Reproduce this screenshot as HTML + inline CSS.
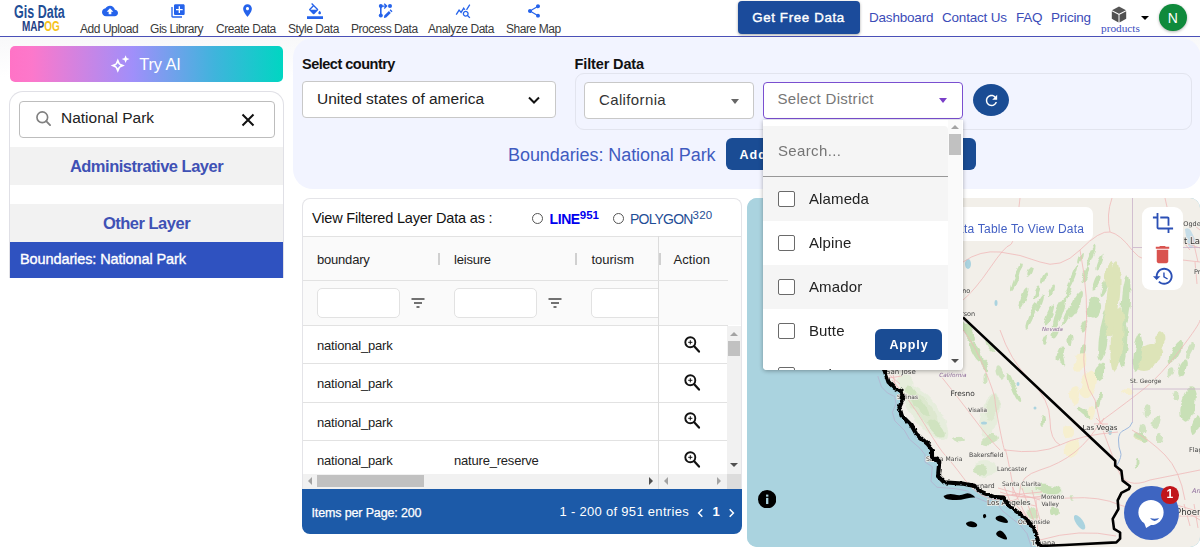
<!DOCTYPE html>
<html lang="en">
<head>
<meta charset="utf-8">
<title>GIS Data - MAPOG</title>
<style>
*{box-sizing:border-box;margin:0;padding:0}
html,body{width:1200px;height:558px;overflow:hidden;background:#fff;font-family:"Liberation Sans",sans-serif;color:#222}
.abs{position:absolute}
#hdr{position:absolute;left:0;top:0;width:1200px;height:37px;background:#fff;border-bottom:1.500px solid #4a50b8}
.nav{position:absolute;top:21.700px;font-size:12px;color:#3a3a3a;white-space:nowrap;letter-spacing:-0.45px;line-height:14px}
.nico{position:absolute;top:2px}
.rlink{position:absolute;top:10px;font-size:13.5px;color:#3b4cb8;white-space:nowrap;letter-spacing:-0.2px;line-height:16px}
#gfd{position:absolute;left:738px;top:1px;width:122px;height:33px;background:#1b4b9b;border-radius:4px;color:#fff;-webkit-text-stroke:0.4px #fff;font-size:13.300px;letter-spacing:0.65px;text-align:center;line-height:33.500px;padding-right:1px;box-shadow:0 1px 3px rgba(0,0,0,.35)}
#tryai{position:absolute;left:9.500px;top:45.500px;width:273.500px;height:36.500px;border-radius:5px;background:linear-gradient(90deg,#ff73c6 0%,#fc78cb 8%,#a08ffa 45%,#3fb4dc 75%,#00d6c2 100%);color:#fff;font-size:17.500px;line-height:37px}
#lbox{position:absolute;left:9px;top:91px;width:275px;height:186.500px;border:1px solid #e0e0e6;border-bottom:0;border-radius:14px 14px 0 0;background:#fff;overflow:hidden}
.band{position:absolute;left:0;width:273px;height:38px;background:#f2f2f2;color:#3f51b5;font-weight:bold;font-size:16.5px;text-align:center;line-height:38px;letter-spacing:-0.5px}
#top{position:absolute;left:292.500px;top:37.500px;width:908px;height:151px;background:#f2f4ff;border-radius:20px}
.lbl{position:absolute;font-weight:bold;font-size:14.5px;color:#111;letter-spacing:-0.5px;white-space:nowrap}
.sel{position:absolute;background:#fff;border:1px solid #c8c8c8;border-radius:4px;font-size:15px;color:#222;white-space:nowrap}
#tbl{position:absolute;left:302px;top:198px;width:440px;height:292px;background:#fff;border:1px solid #e4e4e8;border-bottom:0;border-radius:8px 8px 0 0;overflow:hidden}
.cell{position:absolute;font-size:13px;color:#222;white-space:nowrap;letter-spacing:-0.2px;line-height:15px}
#map{position:absolute;left:747px;top:198px;width:453px;height:348.500px;background:#aad3df;border-radius:10px;overflow:hidden}
#dd{position:absolute;left:763px;top:120px;width:199.500px;height:250px;background:#fff;box-shadow:0 1px 4px rgba(0,0,0,.32);border-radius:0 0 4px 4px;overflow:hidden}
.opt{position:absolute;left:0;width:185px;height:44px;font-size:15px;color:#222;line-height:44px;padding-left:46px;letter-spacing:0.12px}
.cb{position:absolute;left:15px;top:13.500px;width:16.500px;height:16.500px;border:1.500px solid #6a6a6a;border-radius:2px;background:#fff}
</style>
</head>
<body>
<div class="abs" style="left:0;top:37px;width:1200px;height:40px;background:linear-gradient(180deg,#f8f8f9 0,#fafafb 30%,#fff 100%)"></div>
<div id="hdr">
<div class="abs" id="lg1" style="left:13.800px;top:1.500px;font-weight:bold;font-size:18px;color:#1f4e96;white-space:nowrap;transform-origin:0 0;transform:scaleX(.695);line-height:20px">Gis Data</div>
<div class="abs" id="lg2" style="left:21.800px;top:17.500px;font-weight:bold;font-size:15px;color:#1f3f85;white-space:nowrap;transform-origin:0 0;transform:scaleX(.665);line-height:16px">MAP<span style="color:#f5c31c">OG</span></div>
<svg class="nico" style="left:102px;top:3px" width="16" height="16" viewBox="0 0 24 24"><path fill="#2563eb" d="M19.35 10.04C18.67 6.59 15.64 4 12 4 9.11 4 6.6 5.64 5.35 8.04 2.34 8.36 0 10.91 0 14c0 3.31 2.69 6 6 6h13c2.76 0 5-2.24 5-5 0-2.64-2.05-4.78-4.65-4.960zM14 13v4h-4v-4H7l5-5 5 5h-3z"/></svg>
<div class="nav" style="left:80px">Add Upload</div>
<svg class="nico" style="left:170px;top:3px" width="16" height="16" viewBox="0 0 24 24"><path fill="#2563eb" d="M4 6H2v14c0 1.100.900 2 2 2h14v-2H4V6zm16-4H8c-1.100 0-2 .900-2 2v12c0 1.100.900 2 2 2h12c1.100 0 2-.900 2-2V4c0-1.100-.900-2-2-2zm-1 9h-4v4h-2v-4H9V9h4V5h2v4h4v2z"/></svg>
<div class="nav" style="left:150px">Gis Library</div>
<svg class="nico" style="left:240px;top:3px" width="15" height="15" viewBox="0 0 24 24"><path fill="#2563eb" d="M12 2C8.130 2 5 5.130 5 9c0 5.250 7 13 7 13s7-7.750 7-13c0-3.870-3.130-7-7-7zm0 9.500c-1.380 0-2.500-1.120-2.500-2.500s1.120-2.500 2.500-2.500 2.500 1.120 2.500 2.500-1.120 2.500-2.500 2.500z"/></svg>
<div class="nav" style="left:216px">Create Data</div>
<svg class="nico" style="left:307px;top:3px" width="16" height="16" viewBox="0 0 24 24"><path fill="#2563eb" d="M16.560 8.940L7.620 0 6.210 1.410l2.380 2.380-5.150 5.150c-.590.590-.590 1.540 0 2.120l5.500 5.500c.290.290.680.440 1.060.440s.770-.150 1.060-.440l5.500-5.500c.590-.580.590-1.530 0-2.120zM5.210 10L10 5.210 14.790 10H5.210zM19 11.500s-2 2.170-2 3.500c0 1.100.900 2 2 2s2-.900 2-2c0-1.330-2-3.500-2-3.500zM0 20h24v4H0z"/></svg>
<div class="nav" style="left:288px">Style Data</div>
<svg class="nico" style="left:377px;top:2px" width="16" height="16" viewBox="0 0 16 16"><g fill="#2563eb"><circle cx="3.800" cy="4.100" r="2"/><circle cx="3.800" cy="13.400" r="2"/><circle cx="13" cy="4.100" r="2"/><rect x="3" y="4" width="1.600" height="9.500"/><path d="M7.700 1.200l2.900 2.900-2.900 2.900-.95-.95L8.100 4.750H5V3.450h3.100L6.750 2.150z"/><path d="M7.300 13.600l4.600-4.600 1.900 1.900-4.600 4.600-2.300.4zM12.600 8.300l1-1 1.900 1.900-1 1z"/></g></svg>
<div class="nav" style="left:351px">Process Data</div>
<svg class="nico" style="left:455px;top:3px" width="16" height="16" viewBox="0 0 24 24"><path fill="#2563eb" d="M19.880 18.470c.440-.700.700-1.510.700-2.390 0-2.490-2.010-4.500-4.500-4.500s-4.500 2.010-4.500 4.500 2.010 4.500 4.490 4.500c.880 0 1.700-.260 2.390-.700L21.580 23 23 21.580l-3.120-3.110zm-3.800.110c-1.380 0-2.500-1.120-2.500-2.500s1.120-2.500 2.500-2.500 2.500 1.120 2.500 2.500-1.120 2.500-2.500 2.500zm-.360-8.500c-.740.020-1.450.180-2.100.450l-.550-.830-3.800 6.180-3.010-3.520-3.630 5.810L1 17l5-8 3 3.500L13 6l2.720 4.080zm2.590.500c-.640-.280-1.330-.450-2.050-.490L21.380 2 23 3.180l-4.690 7.400z"/></svg>
<div class="nav" style="left:428px">Analyze Data</div>
<svg class="nico" style="left:526px;top:3px" width="16" height="16" viewBox="0 0 24 24"><path fill="#2563eb" d="M18 16.080c-.760 0-1.440.300-1.960.770L8.910 12.700c.050-.230.090-.460.090-.700s-.040-.470-.090-.700l7.050-4.110c.540.500 1.250.810 2.040.810 1.660 0 3-1.340 3-3s-1.340-3-3-3-3 1.340-3 3c0 .240.040.470.090.700L8.040 9.810C7.500 9.310 6.790 9 6 9c-1.660 0-3 1.340-3 3s1.340 3 3 3c.790 0 1.500-.310 2.040-.810l7.120 4.160c-.050.210-.080.430-.080.650 0 1.610 1.310 2.920 2.920 2.920 1.610 0 2.920-1.310 2.920-2.920s-1.310-2.920-2.920-2.920z"/></svg>
<div class="nav" style="left:506px">Share Map</div>
<div id="gfd">Get Free Data</div>
<div class="rlink" style="left:869px">Dashboard</div>
<div class="rlink" style="left:942px">Contact Us</div>
<div class="rlink" style="left:1016px">FAQ</div>
<div class="rlink" style="left:1051px">Pricing</div>
<svg class="abs" style="left:1111px;top:6px" width="16" height="17" viewBox="0 0 16 17"><path fill="#555" d="M8 0.600L15 4.200 8 7.800 1 4.200z"/><path fill="#505050" d="M0.800 5.200L7.500 8.700V16.400L0.800 12.700z"/><path fill="#505050" d="M15.200 5.200L8.500 8.700V16.400L15.200 12.700z"/></svg>
<div class="abs" style="left:1101px;top:21.500px;font-family:'Liberation Serif',serif;font-size:11.300px;color:#3b4cc0;line-height:13px">products</div>
<div class="abs" style="left:1141px;top:16px;width:0;height:0;border-left:4.500px solid transparent;border-right:4.500px solid transparent;border-top:4.500px solid #000"></div>
<div class="abs" style="left:1159px;top:3.500px;width:27.500px;height:27.500px;border-radius:50%;background:#0f8a3c;color:#fff;font-size:14px;text-align:center;line-height:28px;box-shadow:0 1px 3px rgba(0,0,0,.3)">N</div>
</div>
<div id="tryai"><svg class="abs" style="left:0;top:0" width="274" height="37" viewBox="0 0 274 37"><path fill="#fff" d="M107.80 12.50L110.00 17.40L114.90 19.60L110.00 21.80L107.80 26.70L105.60 21.80L100.70 19.60L105.60 17.40z"/><path fill="#a392f6" d="M107.80 17.00L108.90 18.50L110.40 19.60L108.90 20.70L107.80 22.20L106.70 20.70L105.20 19.60L106.70 18.50z"/><path fill="#fff" d="M115.60 9.20L116.70 12.00L119.50 13.10L116.70 14.20L115.60 17.00L114.50 14.20L111.70 13.10L114.50 12.00z"/></svg><span class="abs" style="left:129.800px;top:0.400px;letter-spacing:-0.15px;font-size:16.400px">Try AI</span></div>
<div id="lbox">
<div class="abs" style="left:9px;top:9px;width:256px;height:37px;border:1px solid #bdbdbd;border-radius:4px;background:#fff"></div>
<svg class="abs" style="left:25px;top:18px" width="17.500" height="17.500" viewBox="0 0 18 18"><circle cx="7.500" cy="7.500" r="5.500" fill="none" stroke="#808080" stroke-width="1.700"/><path d="M11.500 11.500L15.500 15.500" stroke="#808080" stroke-width="1.900" stroke-linecap="round"/></svg>
<div class="abs" id="np" style="left:51px;top:16.500px;font-size:15.500px;color:#222;line-height:18px;white-space:nowrap">National Park</div>
<svg class="abs" style="left:231px;top:21px" width="14" height="14" viewBox="0 0 14 14"><path d="M1.500 1.500L12.500 12.500M12.500 1.500L1.500 12.500" stroke="#111" stroke-width="2"/></svg>
<div class="band" style="top:55px">Administrative Layer</div>
<div class="band" style="top:112px">Other Layer</div>
<div class="abs" style="left:0;top:150px;width:274px;height:36px;background:#2f52c0;color:#fff;font-size:14.500px;-webkit-text-stroke:0.35px #fff;line-height:35px;padding-left:10px;letter-spacing:-0.1px;white-space:nowrap" id="bnp">Boundaries: National Park</div>
</div>
<div id="top"><div class="abs" style="left:0.500px;top:0.500px">
<div class="lbl" id="sc" style="left:9px;top:18px">Select country</div>
<div class="sel" style="left:9px;top:43px;width:254px;height:37px"><span class="abs" id="usa" style="left:14px;top:8px;font-size:15.500px;line-height:18px">United states of america</span><svg class="abs" style="left:224px;top:13px" width="14" height="10" viewBox="0 0 14 10"><path d="M2 2.500l5 5 5-5" fill="none" stroke="#111" stroke-width="2"/></svg></div>
<div class="lbl" id="fd" style="left:281.500px;top:18px;letter-spacing:-0.13px">Filter Data</div>
<div class="abs" style="left:282px;top:34.500px;width:617px;height:57px;border:1px solid #e2e4ee;border-radius:9px"></div>
<div class="sel" style="left:291px;top:44px;width:170px;height:37px"><span class="abs" id="cal" style="left:14px;top:7.500px;letter-spacing:0.37px;line-height:18px;color:#333">California</span><div class="abs" style="left:146px;top:16px;border-left:4.500px solid transparent;border-right:4.500px solid transparent;border-top:5px solid #666"></div></div>
<div class="sel" style="left:470px;top:44px;width:200px;height:37px;border:1.500px solid #7a4fd0"><span class="abs" id="sd" style="left:13.500px;top:7px;letter-spacing:0.31px;line-height:18px;color:#777">Select District</span><div class="abs" style="left:175px;top:15px;border-left:4.500px solid transparent;border-right:4.500px solid transparent;border-top:5px solid #7a3fc8"></div></div>
<div class="abs" style="left:680px;top:46px;width:36px;height:32px;border-radius:50%;background:#1a4c94"><svg class="abs" style="left:9.500px;top:7.500px" width="17" height="17" viewBox="0 0 24 24"><path fill="#fff" d="M17.650 6.350C16.200 4.900 14.210 4 12 4c-4.420 0-7.990 3.580-7.990 8s3.570 8 7.990 8c3.730 0 6.840-2.550 7.730-6h-2.080c-.820 2.330-3.040 4-5.650 4-3.310 0-6-2.690-6-6s2.690-6 6-6c1.660 0 3.140.690 4.220 1.780L13 11h7V4l-2.350 2.350z"/></svg></div>
<div class="abs" id="bt" style="left:215px;top:105.750px;font-size:18px;color:#3f5bbf;white-space:nowrap;line-height:22px;letter-spacing:-0.065px">Boundaries: National Park</div>
<div class="abs" style="left:432.500px;top:100px;width:250.500px;height:32px;border-radius:6px;background:#1a4c94;color:#fff;font-weight:bold;font-size:12.500px;letter-spacing:1px;line-height:35px;padding-left:14px;white-space:nowrap">Add Layer Data To Map</div>
</div></div>
<!--TBLSTART--><div id="tbl">
<div class="abs" id="vf" style="left:9px;top:9.750px;font-size:14.500px;color:#111;white-space:nowrap;letter-spacing:-0.19px;line-height:18px">View Filtered Layer Data as :</div>
<div class="abs" style="left:229px;top:14px;width:11px;height:11px;border:1px solid #555;border-radius:50%;background:#fff"></div>
<div class="abs" id="ln" style="left:246.500px;top:9.500px;font-size:14px;font-weight:bold;color:#0000ee;white-space:nowrap;line-height:20px;letter-spacing:-0.4px">LINE<span style="font-size:11.500px;position:relative;top:-5px;letter-spacing:0">951</span></div>
<div class="abs" style="left:309.500px;top:14px;width:11px;height:11px;border:1px solid #555;border-radius:50%;background:#fff"></div>
<div class="abs" id="pg" style="left:327px;top:9.500px;font-size:14px;color:#1f4e96;white-space:nowrap;line-height:20px;letter-spacing:-0.8px">POLYGON<span style="font-size:11.500px;position:relative;top:-5px;letter-spacing:0.2px">320</span></div>
<div class="abs" style="left:0;top:37.25px;width:440px;height:88.75px;background:#fafafa;border-top:1px solid #e2e2e2"></div>
<div class="abs" style="left:0;top:81px;width:425px;height:1px;background:#e2e2e2"></div>
<div class="cell" id="c1" style="left:14px;top:52.5px">boundary</div>
<div class="abs" style="left:134.500px;top:53.75px;width:2px;height:12.500px;background:#d0d0d0"></div>
<div class="cell" style="left:151px;top:52.5px">leisure</div>
<div class="abs" style="left:271.500px;top:53.75px;width:2px;height:12.500px;background:#d0d0d0"></div>
<div class="cell" style="left:288.400px;top:52.5px;letter-spacing:0px">tourism</div>
<div class="abs" style="left:14px;top:89px;width:83px;height:29.500px;background:#fff;border:1px solid #e2e2e2;border-radius:5px"></div>
<div class="abs" style="left:151px;top:89px;width:83px;height:29.500px;background:#fff;border:1px solid #e2e2e2;border-radius:5px"></div>
<div class="abs" style="left:288px;top:89px;width:83px;height:29.500px;background:#fff;border:1px solid #e2e2e2;border-radius:5px"></div>
<svg class="abs" style="left:108px;top:98.5px" width="14" height="10" viewBox="0 0 14 10"><path d="M0.500 1h13M3 5h8M5.500 9h3" stroke="#444" stroke-width="1.500"/></svg>
<svg class="abs" style="left:245px;top:98.5px" width="14" height="10" viewBox="0 0 14 10"><path d="M0.500 1h13M3 5h8M5.500 9h3" stroke="#444" stroke-width="1.500"/></svg>
<div class="abs" style="left:0;top:126px;width:425px;height:1px;background:#e2e2e2"></div>
<div class="cell" id="r0" style="left:14px;top:139px">national_park</div>
<div class="abs" style="left:0;top:164.25px;width:425px;height:1px;background:#e2e2e2"></div>
<div class="cell" id="r1" style="left:14px;top:177.25px">national_park</div>
<div class="abs" style="left:0;top:202.5px;width:425px;height:1px;background:#e2e2e2"></div>
<div class="cell" id="r2" style="left:14px;top:215.5px">national_park</div>
<div class="abs" style="left:0;top:241px;width:425px;height:1px;background:#e2e2e2"></div>
<div class="cell" id="r3" style="left:14px;top:254px">national_park</div>
<div class="cell" style="left:151px;top:254px">nature_reserve</div>
<div class="abs" style="left:355px;top:38.25px;width:70px;height:87.75px;background:#fafafa"></div>
<div class="abs" style="left:355px;top:127px;width:70px;height:147.8px;background:#fff"></div>
<div class="abs" style="left:355px;top:126px;width:70px;height:1px;background:#e2e2e2"></div>
<svg class="abs" style="left:381px;top:136.5px" width="16" height="16" viewBox="0 0 16 16" overflow="visible"><circle cx="6.300" cy="6.300" r="5" fill="none" stroke="#111" stroke-width="1.900"/><path d="M10.200 10.200L15 15.600" stroke="#111" stroke-width="2.200" stroke-linecap="round"/><path d="M4.200 6.300h4.200M6.300 4.200v4.200" stroke="#111" stroke-width="1"/></svg>
<div class="abs" style="left:355px;top:164.25px;width:70px;height:1px;background:#e2e2e2"></div>
<svg class="abs" style="left:381px;top:174.75px" width="16" height="16" viewBox="0 0 16 16" overflow="visible"><circle cx="6.300" cy="6.300" r="5" fill="none" stroke="#111" stroke-width="1.900"/><path d="M10.200 10.200L15 15.600" stroke="#111" stroke-width="2.200" stroke-linecap="round"/><path d="M4.200 6.300h4.200M6.300 4.200v4.200" stroke="#111" stroke-width="1"/></svg>
<div class="abs" style="left:355px;top:202.5px;width:70px;height:1px;background:#e2e2e2"></div>
<svg class="abs" style="left:381px;top:213.0px" width="16" height="16" viewBox="0 0 16 16" overflow="visible"><circle cx="6.300" cy="6.300" r="5" fill="none" stroke="#111" stroke-width="1.900"/><path d="M10.200 10.200L15 15.600" stroke="#111" stroke-width="2.200" stroke-linecap="round"/><path d="M4.200 6.300h4.200M6.300 4.200v4.200" stroke="#111" stroke-width="1"/></svg>
<div class="abs" style="left:355px;top:241px;width:70px;height:1px;background:#e2e2e2"></div>
<svg class="abs" style="left:381px;top:251.5px" width="16" height="16" viewBox="0 0 16 16" overflow="visible"><circle cx="6.300" cy="6.300" r="5" fill="none" stroke="#111" stroke-width="1.900"/><path d="M10.200 10.200L15 15.600" stroke="#111" stroke-width="2.200" stroke-linecap="round"/><path d="M4.200 6.300h4.200M6.300 4.200v4.200" stroke="#111" stroke-width="1"/></svg>
<div class="abs" style="left:355px;top:37.25px;width:1px;height:252.25px;background:#dcdcdc"></div>
<div class="abs" style="left:356px;top:53.75px;width:2px;height:12.500px;background:#d0d0d0"></div>
<div class="cell" style="left:370.500px;top:52.5px;letter-spacing:0.07px">Action</div>
<div class="abs" style="left:355px;top:81px;width:70px;height:1px;background:#e2e2e2"></div>
<div class="abs" id="vs" style="left:424px;top:127px;width:16px;height:147.8px;background:#f1f1f1"><div class="abs" style="left:3px;top:5.500px;border-left:4px solid transparent;border-right:4px solid transparent;border-bottom:4px solid #a3a3a3"></div><div class="abs" style="left:1px;top:14.500px;width:12px;height:15px;background:#c1c1c1"></div><div class="abs" style="left:3px;top:136.8px;border-left:4px solid transparent;border-right:4px solid transparent;border-top:4px solid #505050"></div></div>
<div class="abs" id="hs" style="left:0;top:274.8px;width:440px;height:16.19999999999999px;background:#f1f1f1"><div class="abs" style="left:5px;top:3px;border-top:4px solid transparent;border-bottom:4px solid transparent;border-right:4px solid #a3a3a3"></div><div class="abs" style="left:14px;top:1px;width:107px;height:12px;background:#c1c1c1"></div><div class="abs" style="left:346px;top:3px;border-top:4px solid transparent;border-bottom:4px solid transparent;border-left:4px solid #505050"></div><div class="abs" style="left:361px;top:3px;border-top:4px solid transparent;border-bottom:4px solid transparent;border-right:4px solid #a3a3a3"></div><div class="abs" style="left:414px;top:3px;border-top:4px solid transparent;border-bottom:4px solid transparent;border-left:4px solid #a3a3a3"></div><div class="abs" style="left:424px;top:0;width:16px;height:17px;background:#dcdcdc"></div><div class="abs" style="left:355px;top:0;width:1px;height:16px;background:#dcdcdc"></div></div>
</div>
<div class="abs" style="left:302px;top:488.5px;width:439.500px;height:45px;background:#1c5aa8;border-radius:0 0 8px 8px"></div>
<div class="abs" id="ipp" style="left:311.500px;top:504.5px;font-size:12.500px;color:#fff;-webkit-text-stroke:0.25px #fff;white-space:nowrap;line-height:16px;letter-spacing:-0.14px">Items per Page: 200</div>
<div class="abs" id="ent" style="left:559.500px;top:504.0px;font-size:13px;color:#fff;white-space:nowrap;line-height:16px;letter-spacing:0.3px">1 - 200 of 951 entries</div>
<svg class="abs" style="left:696.500px;top:508.0px" width="7" height="10" viewBox="0 0 7 10"><path d="M5.300 1.200L1.600 5l3.700 3.800" fill="none" stroke="#fff" stroke-width="1.500"/></svg>
<div class="abs" style="left:712.500px;top:504.0px;font-size:13px;color:#fff;font-weight:bold;line-height:16px">1</div>
<svg class="abs" style="left:727.500px;top:508.0px" width="7" height="10" viewBox="0 0 7 10"><path d="M1.700 1.200L5.400 5l-3.700 3.800" fill="none" stroke="#fff" stroke-width="1.500"/></svg><!--TBLEND-->
<div id="map">
<!--MAPSTART--><svg class="abs" style="left:0;top:0" width="453" height="349" viewBox="747 198 453 349">
<defs><filter id="bl" x="-5%" y="-5%" width="110%" height="110%"><feTurbulence type="fractalNoise" baseFrequency="0.09" numOctaves="2" seed="7" result="n"/><feDisplacementMap in="SourceGraphic" in2="n" scale="7" xChannelSelector="R" yChannelSelector="G" result="d"/><feGaussianBlur in="d" stdDeviation="0.5"/></filter><filter id="jg" x="-5%" y="-5%" width="110%" height="110%"><feTurbulence type="fractalNoise" baseFrequency="0.22" numOctaves="2" seed="3" result="n"/><feDisplacementMap in="SourceGraphic" in2="n" scale="3.2" xChannelSelector="R" yChannelSelector="G"/></filter></defs>
<rect x="747" y="198" width="453" height="349" fill="#aad3df"/>
<polygon fill="#f2efe9" points="860.0,198.0 862.0,230.0 866.0,260.0 868.0,290.0 872.0,320.0 876.0,345.0 880.0,362.0 884.8,371.0 888.5,382.0 894.5,388.0 901.8,391.6 903.0,398.9 899.4,407.3 901.8,415.8 911.5,425.5 916.3,434.0 927.2,443.6 932.0,449.7 932.0,457.0 939.3,461.8 938.0,476.3 944.1,482.3 962.3,483.6 974.4,486.0 981.6,492.0 993.7,496.9 1003.4,497.5 1009.1,505.6 1018.0,512.7 1026.9,519.8 1034.0,528.6 1037.5,539.3 1039.3,546.0 1039.3,548.0 1200.0,548.0 1200.0,198.0"/>
<g filter="url(#bl)">
<ellipse cx="1015.0" cy="280.0" rx="2.4" ry="12.0" fill="#c8e0b6" transform="rotate(22 1015.0 280.0)"/>
<ellipse cx="1023.8" cy="297.7" rx="2.4" ry="11.0" fill="#c8e0b6" transform="rotate(22 1023.8 297.7)"/>
<ellipse cx="1031.4" cy="315.3" rx="2.6" ry="14.5" fill="#c8e0b6" transform="rotate(22 1031.4 315.3)"/>
<ellipse cx="1040.0" cy="302.7" rx="2.4" ry="8.5" fill="#c8e0b6" transform="rotate(22 1040.0 302.7)"/>
<ellipse cx="1049.0" cy="315.3" rx="2.6" ry="12.0" fill="#c8e0b6" transform="rotate(22 1049.0 315.3)"/>
<ellipse cx="1059.0" cy="312.8" rx="3.6" ry="17.0" fill="#c8e0b6" transform="rotate(22 1059.0 312.8)"/>
<ellipse cx="1066.5" cy="316.0" rx="2.4" ry="10.0" fill="#c8e0b6" transform="rotate(22 1066.5 316.0)"/>
<ellipse cx="1075.3" cy="305.2" rx="4.2" ry="14.5" fill="#c8e0b6" transform="rotate(22 1075.3 305.2)"/>
<ellipse cx="1072.8" cy="277.6" rx="2.1" ry="13.5" fill="#c8e0b6" transform="rotate(22 1072.8 277.6)"/>
<ellipse cx="1091.6" cy="255.0" rx="2.1" ry="12.0" fill="#c8e0b6" transform="rotate(22 1091.6 255.0)"/>
<ellipse cx="1085.3" cy="275.0" rx="2.4" ry="8.5" fill="#c8e0b6" transform="rotate(22 1085.3 275.0)"/>
<ellipse cx="1096.6" cy="282.6" rx="2.6" ry="8.5" fill="#c8e0b6" transform="rotate(22 1096.6 282.6)"/>
<ellipse cx="1104.0" cy="287.7" rx="2.6" ry="10.0" fill="#c8e0b6" transform="rotate(22 1104.0 287.7)"/>
<ellipse cx="1060.0" cy="353.0" rx="2.4" ry="7.0" fill="#c8e0b6" transform="rotate(22 1060.0 353.0)"/>
<ellipse cx="1083.0" cy="350.0" rx="2.4" ry="5.0" fill="#c8e0b6" transform="rotate(22 1083.0 350.0)"/>
<ellipse cx="1044.0" cy="278.0" rx="2.1" ry="6.0" fill="#c8e0b6" transform="rotate(22 1044.0 278.0)"/>
<ellipse cx="1030.0" cy="272.0" rx="1.9" ry="5.0" fill="#c8e0b6" transform="rotate(22 1030.0 272.0)"/>
<ellipse cx="1052.0" cy="290.0" rx="2.1" ry="6.0" fill="#c8e0b6" transform="rotate(22 1052.0 290.0)"/>
<ellipse cx="1100.0" cy="262.0" rx="2.1" ry="8.0" fill="#c8e0b6" transform="rotate(22 1100.0 262.0)"/>
<ellipse cx="1036.0" cy="292.0" rx="2.1" ry="7.0" fill="#c8e0b6" transform="rotate(22 1036.0 292.0)"/>
<ellipse cx="1020.0" cy="268.0" rx="1.9" ry="6.0" fill="#c8e0b6" transform="rotate(22 1020.0 268.0)"/>
<ellipse cx="1056.0" cy="332.0" rx="2.4" ry="7.0" fill="#c8e0b6" transform="rotate(22 1056.0 332.0)"/>
<ellipse cx="1046.0" cy="340.0" rx="2.1" ry="5.0" fill="#c8e0b6" transform="rotate(22 1046.0 340.0)"/>
<ellipse cx="1084.0" cy="325.0" rx="2.4" ry="7.0" fill="#c8e0b6" transform="rotate(22 1084.0 325.0)"/>
<ellipse cx="1068.0" cy="292.0" rx="2.1" ry="7.0" fill="#c8e0b6" transform="rotate(22 1068.0 292.0)"/>
<ellipse cx="1080.0" cy="258.0" rx="1.9" ry="6.0" fill="#c8e0b6" transform="rotate(22 1080.0 258.0)"/>
<ellipse cx="1094.0" cy="307.7" rx="7.0" ry="11.0" fill="#c8e0b6" transform="rotate(10 1094.0 307.7)"/>
<ellipse cx="1104.0" cy="335.0" rx="4.5" ry="26.0" fill="#c8e0b6" transform="rotate(8 1104.0 335.0)"/>
<ellipse cx="1126.0" cy="300.0" rx="4.0" ry="26.0" fill="#c8e0b6" transform="rotate(4 1126.0 300.0)"/>
<ellipse cx="1123.0" cy="345.0" rx="4.0" ry="22.0" fill="#c8e0b6" transform="rotate(4 1123.0 345.0)"/>
<ellipse cx="1100.0" cy="372.0" rx="5.0" ry="10.0" fill="#c8e0b6" transform="rotate(25 1100.0 372.0)"/>
<ellipse cx="1113.0" cy="300.0" rx="6.5" ry="38.0" fill="#dde4b8" transform="rotate(6 1113.0 300.0)"/>
<ellipse cx="1117.0" cy="340.0" rx="6.0" ry="32.0" fill="#dde4b8" transform="rotate(5 1117.0 340.0)"/>
<ellipse cx="1109.0" cy="275.0" rx="4.0" ry="14.0" fill="#dde4b8" transform="rotate(8 1109.0 275.0)"/>
<ellipse cx="1150.0" cy="355.0" rx="13.0" ry="10.0" fill="#dde4b8" transform="rotate(-35 1150.0 355.0)"/>
<ellipse cx="1160.0" cy="340.0" rx="5.0" ry="8.0" fill="#dde4b8" transform="rotate(20 1160.0 340.0)"/>
<ellipse cx="1144.0" cy="366.0" rx="9.0" ry="5.0" fill="#dde4b8" transform="rotate(0 1144.0 366.0)"/>
<ellipse cx="1138.0" cy="352.0" rx="4.0" ry="20.0" fill="#c8e0b6" transform="rotate(8 1138.0 352.0)"/>
<ellipse cx="1176.0" cy="352.0" rx="4.0" ry="12.0" fill="#c8e0b6" transform="rotate(25 1176.0 352.0)"/>
<ellipse cx="1182.0" cy="368.0" rx="4.0" ry="9.0" fill="#c8e0b6" transform="rotate(20 1182.0 368.0)"/>
<ellipse cx="1171.0" cy="372.0" rx="3.0" ry="6.0" fill="#d0e3c0" transform="rotate(20 1171.0 372.0)"/>
<ellipse cx="1190.0" cy="350.0" rx="3.0" ry="10.0" fill="#d0e3c0" transform="rotate(25 1190.0 350.0)"/>
<ellipse cx="1080.0" cy="362.0" rx="6.0" ry="10.0" fill="#f6efcf" transform="rotate(15 1080.0 362.0)"/>
<ellipse cx="1088.0" cy="385.0" rx="7.0" ry="14.0" fill="#f6efcf" transform="rotate(20 1088.0 385.0)"/>
<ellipse cx="1075.0" cy="395.0" rx="5.0" ry="9.0" fill="#f6efcf" transform="rotate(0 1075.0 395.0)"/>
<ellipse cx="1092.0" cy="412.0" rx="5.0" ry="7.0" fill="#f6efcf" transform="rotate(0 1092.0 412.0)"/>
<ellipse cx="1072.0" cy="448.0" rx="7.0" ry="10.0" fill="#f6efcf" transform="rotate(20 1072.0 448.0)"/>
<ellipse cx="1128.0" cy="392.0" rx="6.0" ry="3.0" fill="#f6efcf" transform="rotate(0 1128.0 392.0)"/>
<ellipse cx="1068.0" cy="432.0" rx="5.0" ry="5.0" fill="#f6efcf" transform="rotate(0 1068.0 432.0)"/>
<ellipse cx="1188.0" cy="405.0" rx="7.0" ry="18.0" fill="#c8e0b6" transform="rotate(12 1188.0 405.0)"/>
<ellipse cx="1196.0" cy="425.0" rx="4.0" ry="10.0" fill="#c8e0b6" transform="rotate(10 1196.0 425.0)"/>
<ellipse cx="1147.0" cy="412.0" rx="3.0" ry="7.0" fill="#d0e3c0" transform="rotate(15 1147.0 412.0)"/>
<ellipse cx="1156.0" cy="422.0" rx="3.0" ry="8.0" fill="#d0e3c0" transform="rotate(15 1156.0 422.0)"/>
<ellipse cx="1143.0" cy="428.0" rx="3.0" ry="5.0" fill="#d0e3c0" transform="rotate(0 1143.0 428.0)"/>
<ellipse cx="1141.0" cy="438.0" rx="7.0" ry="4.0" fill="#dde4b8" transform="rotate(25 1141.0 438.0)"/>
<ellipse cx="1160.0" cy="438.0" rx="3.0" ry="5.0" fill="#d0e3c0" transform="rotate(0 1160.0 438.0)"/>
<ellipse cx="1141.0" cy="437.0" rx="8.0" ry="3.5" fill="#c8e0b6" transform="rotate(40 1141.0 437.0)"/>
<ellipse cx="1136.0" cy="464.0" rx="1.5" ry="6.0" fill="#c8e0b6" transform="rotate(0 1136.0 464.0)"/>
<ellipse cx="1176.0" cy="396.0" rx="4.0" ry="5.0" fill="#d0e3c0" transform="rotate(0 1176.0 396.0)"/>
<ellipse cx="1084.0" cy="412.0" rx="9.0" ry="3.0" fill="#c8e0b6" transform="rotate(40 1084.0 412.0)"/>
<ellipse cx="1099.0" cy="400.0" rx="2.5" ry="9.0" fill="#c8e0b6" transform="rotate(10 1099.0 400.0)"/>
<ellipse cx="1062.0" cy="358.0" rx="2.5" ry="9.0" fill="#c8e0b6" transform="rotate(-15 1062.0 358.0)"/>
<ellipse cx="1043.0" cy="420.0" rx="2.0" ry="6.0" fill="#c8e0b6" transform="rotate(0 1043.0 420.0)"/>
<ellipse cx="1070.0" cy="340.0" rx="2.5" ry="5.0" fill="#c8e0b6" transform="rotate(0 1070.0 340.0)"/>
<ellipse cx="925.0" cy="412.0" rx="13.0" ry="34.0" fill="#e6eddc" transform="rotate(-38 925.0 412.0)"/>
<ellipse cx="922.0" cy="408.0" rx="8.0" ry="24.0" fill="#dde8cf" transform="rotate(-38 922.0 408.0)"/>
<ellipse cx="905.0" cy="382.0" rx="8.0" ry="10.0" fill="#e6eddc" transform="rotate(-30 905.0 382.0)"/>
<ellipse cx="990.0" cy="415.0" rx="9.0" ry="22.0" fill="#e6eddc" transform="rotate(12 990.0 415.0)"/>
<ellipse cx="985.0" cy="468.0" rx="12.0" ry="8.0" fill="#e6eddc" transform="rotate(0 985.0 468.0)"/>
<ellipse cx="1040.0" cy="490.0" rx="22.0" ry="6.0" fill="#e6eddc" transform="rotate(8 1040.0 490.0)"/>
<ellipse cx="920.0" cy="405.0" rx="4.0" ry="14.0" fill="#d0e3c0" transform="rotate(-38 920.0 405.0)"/>
<ellipse cx="936.0" cy="428.0" rx="5.0" ry="12.0" fill="#d0e3c0" transform="rotate(-42 936.0 428.0)"/>
<ellipse cx="911.0" cy="392.0" rx="4.0" ry="7.0" fill="#d0e3c0" transform="rotate(-30 911.0 392.0)"/>
<ellipse cx="992.0" cy="408.0" rx="6.0" ry="13.0" fill="#dde8cf" transform="rotate(15 992.0 408.0)"/>
<ellipse cx="990.0" cy="440.0" rx="9.0" ry="5.0" fill="#d0e3c0" transform="rotate(-10 990.0 440.0)"/>
<ellipse cx="980.0" cy="470.0" rx="7.0" ry="5.0" fill="#d0e3c0" transform="rotate(0 980.0 470.0)"/>
<ellipse cx="1016.0" cy="392.0" rx="2.5" ry="11.0" fill="#c8e0b6" transform="rotate(-25 1016.0 392.0)"/>
<ellipse cx="1010.0" cy="380.0" rx="2.5" ry="7.0" fill="#c8e0b6" transform="rotate(-20 1010.0 380.0)"/>
<ellipse cx="1000.0" cy="372.0" rx="3.0" ry="7.0" fill="#d0e3c0" transform="rotate(-20 1000.0 372.0)"/>
<ellipse cx="1048.0" cy="489.0" rx="12.0" ry="4.0" fill="#c8e0b6" transform="rotate(8 1048.0 489.0)"/>
<ellipse cx="1033.0" cy="513.0" rx="5.0" ry="7.0" fill="#d0e3c0" transform="rotate(-30 1033.0 513.0)"/>
<ellipse cx="1054.0" cy="511.0" rx="4.0" ry="3.5" fill="#c8e0b6" transform="rotate(0 1054.0 511.0)"/>
<ellipse cx="1073.0" cy="498.0" rx="1.5" ry="4.0" fill="#d0e3c0" transform="rotate(0 1073.0 498.0)"/>
<ellipse cx="985.0" cy="380.0" rx="2.5" ry="5.0" fill="#d0e3c0" transform="rotate(0 985.0 380.0)"/>
<ellipse cx="958.0" cy="440.0" rx="7.0" ry="3.0" fill="#d0e3c0" transform="rotate(10 958.0 440.0)"/>
<ellipse cx="968.0" cy="332.0" rx="4.0" ry="12.0" fill="#c8e0b6" transform="rotate(-30 968.0 332.0)"/>
<ellipse cx="976.0" cy="352.0" rx="4.0" ry="11.0" fill="#c8e0b6" transform="rotate(-30 976.0 352.0)"/>
<ellipse cx="990.0" cy="345.0" rx="3.0" ry="8.0" fill="#d0e3c0" transform="rotate(-30 990.0 345.0)"/>
<ellipse cx="984.0" cy="366.0" rx="3.0" ry="7.0" fill="#c8e0b6" transform="rotate(-30 984.0 366.0)"/>
</g>
<ellipse cx="968" cy="264" rx="3" ry="5" fill="#aad3df"/>
<ellipse cx="984" cy="423" rx="3" ry="1.5" fill="#aad3df"/>
<ellipse cx="1110" cy="430" rx="2" ry="5" fill="#aad3df"/>
<ellipse cx="996" cy="303" rx="1.5" ry="3" fill="#aad3df"/>
<ellipse cx="1035" cy="408" rx="1.5" ry="1.5" fill="#aad3df"/>
<ellipse cx="1018" cy="384" rx="1.5" ry="2" fill="#aad3df"/>
<ellipse cx="1079.600" cy="522.300" rx="3.600" ry="8.500" fill="#aad3df" transform="rotate(-35 1079.600 522.300)"/>
<path d="M1185 229q4-2 6 2t4 8-2 8-6-6-2-12z" fill="#c6dde8"/>
<path d="M963 262Q980 250 1000 252T1040 262T1080 250T1110 232T1132 250T1165 258L1200 262" fill="none" stroke="#f0b9b9" stroke-width="0.8"/>
<path d="M963 300Q975 290 990 268T1010 245T1020 198" fill="none" stroke="#f0b9b9" stroke-width="0.8"/>
<path d="M1110 232Q1106 215 1112 198" fill="none" stroke="#f0b9b9" stroke-width="0.8"/>
<path d="M1080 250Q1090 300 1085 340T1095 400L1100 422" fill="none" stroke="#f0b9b9" stroke-width="0.8"/>
<path d="M1100 422Q1130 400 1145 388T1180 350T1200 320" fill="none" stroke="#f0b9b9" stroke-width="0.8"/>
<path d="M1100 422Q1090 440 1075 452T1040 470T1020 490T1005 500" fill="none" stroke="#f0b9b9" stroke-width="0.8"/>
<path d="M1100 422Q1110 450 1118 470T1150 480L1200 470" fill="none" stroke="#f0b9b9" stroke-width="0.8"/>
<path d="M963 330Q975 345 985 370T995 400T1000 430T1005 450T1010 470T1012 495" fill="none" stroke="#f0b9b9" stroke-width="0.8"/>
<path d="M892 380Q910 400 925 425T945 455T965 480T1000 500" fill="none" stroke="#f0b9b9" stroke-width="0.8"/>
<path d="M940 375Q960 400 975 420T1000 450" fill="none" stroke="#f0b9b9" stroke-width="0.8"/>
<path d="M1005 450Q1040 455 1060 445T1118 432" fill="none" stroke="#f0b9b9" stroke-width="0.8"/>
<path d="M1012 495Q1040 500 1070 498T1120 505T1160 500L1200 512" fill="none" stroke="#f0b9b9" stroke-width="0.8"/>
<path d="M1012 500Q1030 520 1040 540" fill="none" stroke="#f0b9b9" stroke-width="0.8"/>
<path d="M1040 540Q1080 528 1116 536" fill="none" stroke="#f0b9b9" stroke-width="0.8"/>
<path d="M1132 430Q1150 440 1165 455T1185 500" fill="none" stroke="#f0b9b9" stroke-width="0.8"/>
<path d="M1165 198Q1170 230 1190 250" fill="none" stroke="#f0b9b9" stroke-width="0.8"/>
<path d="M1000 330Q1010 360 1030 380T1050 420T1060 445" fill="none" stroke="#f0b9b9" stroke-width="0.8"/>
<path d="M998 488L1040 500M1000 496L1042 492M1004 486L1012 506M1012 486L1024 512M1022 488L1034 522M1032 490L1040 520M1000 492Q1020 500 1044 496M1008 500L1036 506M1036 500L1038 540M1024 512L1036 530" fill="none" stroke="#f0b9b9" stroke-width="0.8"/>
<path d="M886 372L900 384M892 370L896 388M888 378L902 376" fill="none" stroke="#f0b9b9" stroke-width="0.8"/>
<path d="M1096 418L1106 428M1104 418L1098 430M1094 424H1108" fill="none" stroke="#f0b9b9" stroke-width="0.8"/>
<path d="M1180 508L1200 520M1184 504L1190 526M1178 516H1200M1194 504L1198 528" fill="none" stroke="#f0b9b9" stroke-width="0.8"/>
<path d="M1190 222L1200 230M1192 236L1198 262M1188 244L1200 248M1195 262L1197 284" fill="none" stroke="#f0b9b9" stroke-width="0.8"/>
<path d="M1132.500 198V247.500H1200M1132.500 247.500V422M1132.500 389H1200" fill="none" stroke="#c9b3c9" stroke-width="0.8"/>
<path d="M1132.500 422q-2 6-8 8t-6 10 2 12-4 14" fill="none" stroke="#9db8dd" stroke-width="1"/>
<polyline fill="none" stroke="#b9a6c9" stroke-width="0.7" opacity="0.8" points="877.8,376.0 881.5,387.0 887.5,393.0 894.8,396.6 896.0,403.9 892.4,412.3 894.8,420.8 904.5,430.5 909.3,439.0 920.2,448.6 925.0,454.7 925.0,462.0 932.3,466.8 931.0,481.3 937.1,487.3 955.3,488.6 967.4,491.0 974.6,497.0 986.7,501.9 996.4,502.5 1002.1,510.6 1011.0,517.7 1019.9,524.8 1027.0,533.6 1030.5,544.3 1032.3,551.0"/>
<g font-family="'DejaVu Sans','Liberation Sans',sans-serif" stroke="#f2efe9" stroke-width="1.500" paint-order="stroke">
<text x="950.6" y="396" font-size="7.4" fill="#333" >Fresno</text>
<text x="968.3" y="411.5" font-size="5.8" fill="#444" >Visalia</text>
<text x="969" y="456.5" font-size="6.2" fill="#444" >Bakersfield</text>
<text x="997" y="470.7" font-size="6.1" fill="#444" >Lancaster</text>
<text x="1002" y="485.5" font-size="6" fill="#444" >Santa Clarita</text>
<text x="926" y="461" font-size="6.1" fill="#444" >Santa Maria</text>
<text x="897" y="398.8" font-size="5.9" fill="#444" >Salinas</text>
<text x="886" y="373.8" font-size="7" fill="#444" >San Jose</text>
<text x="939.3" y="376.6" font-size="5.7" fill="#8d6b9a" font-style="italic">California</text>
<text x="1042" y="331" font-size="5.5" fill="#8d6b9a" font-style="italic">Nevada</text>
<text x="1082.4" y="430.2" font-size="7" fill="#333" >Las Vegas</text>
<text x="1130" y="383.2" font-size="5.9" fill="#444" >St. George</text>
<text x="971" y="488" font-size="6.5" fill="#444" >Oxnard</text>
<text x="987" y="504.5" font-size="7.3" fill="#333" >Los Angeles</text>
<text x="1041" y="498.7" font-size="6.3" fill="#444" >Moreno</text>
<text x="1041.5" y="506" font-size="5.9" fill="#444" >Valley</text>
<text x="1018" y="524.2" font-size="6.1" fill="#444" >Oceanside</text>
<text x="1031.6" y="545.3" font-size="6.5" fill="#444" >Tijuana</text>
<text x="1176" y="515" font-size="8.5" fill="#333" >Phoenix</text>
<text x="1189" y="452" font-size="6.5" fill="#444" >Flagstaff</text>
<text x="1183.3" y="226" font-size="6.5" fill="#444" >Ogden</text>
<text x="1171" y="243.6" font-size="8.5" fill="#333" >Salt Lake City</text>
<text x="1194" y="274" font-size="6.5" fill="#444" >Provo</text>
<text x="954" y="293" font-size="6.5" fill="#444" >Reno</text>
<text x="952.5" y="316" font-size="6.5" fill="#444" >Carson</text>
<text x="1192" y="492.5" font-size="6.5" fill="#8d6b9a" font-style="italic">Arizona</text>
</g>
<polyline filter="url(#jg)" fill="none" stroke="#000" stroke-width="4.100" stroke-linejoin="round" points="862.0,230.0 866.0,260.0 868.0,290.0 872.0,320.0 876.0,345.0 880.0,362.0 884.8,371.0 888.5,382.0 894.5,388.0 901.8,391.6 903.0,398.9 899.4,407.3 901.8,415.8 911.5,425.5 916.3,434.0 927.2,443.6 932.0,449.7 932.0,457.0 939.3,461.8 938.0,476.3 944.1,482.3 962.3,483.6 974.4,486.0 981.6,492.0 993.7,496.9 1003.4,497.5 1009.1,505.6 1018.0,512.7 1026.9,519.8 1034.0,528.6 1037.5,539.3 1039.3,546.0"/>
<polyline fill="none" stroke="#000" stroke-width="2.600" stroke-linejoin="round" points="963.0,317.4 1115.2,460.8 1115.2,465.7 1121.4,470.7 1122.6,480.6 1130.0,486.3 1128.8,489.2 1121.4,492.9 1117.7,500.4 1118.4,509.0 1112.7,518.9 1114.0,528.8 1120.1,532.5 1120.1,538.7 1116.4,542.4 1064.5,545.0 1039.3,546.0"/>
<path d="M943.500 496q5-3 11-1.500t10-.500 8 1 2 2.500-8 1-10 1.500-8-.500-5-3.500z" fill="#000"/>
<path d="M966 523q4-3 8-1t3 4-6 1-5-4z" fill="#000"/>
<path d="M983 515q2-2 3 0t-1 3-2-3z" fill="#000"/>
<path d="M996 517q4-3 8 0t4 5-7 0-5-5z" fill="#000"/>
<path d="M997 532q3-3 6 0t4 6-6 0-4-6z" fill="#000"/>
</svg><!--MAPEND-->
<div class="abs" style="left:120px;top:9px;width:226px;height:33.500px;border-radius:7px;background:#fff"></div>
<div class="abs" id="clk" style="left:120px;top:22px;width:217.200px;color:#4360c4;font-size:12px;line-height:18px;text-align:right;white-space:nowrap;letter-spacing:0.23px">Click On Data Table To View Data</div>
<div class="abs" style="left:395px;top:9px;width:41px;height:83px;border-radius:9px;background:#fff">
<svg class="abs" style="left:9.500px;top:4.800px" width="22" height="22" viewBox="0 0 24 24"><path fill="#2b4fb5" d="M17 15h2V7c0-1.100-.900-2-2-2H9v2h8v8zM7 17V1H5v4H1v2h4v10c0 1.100.900 2 2 2h10v4h2v-4h4v-2H7z"/></svg>
<svg class="abs" style="left:8.700px;top:35.500px" width="23" height="23" viewBox="0 0 24 24"><path fill="#d9534f" d="M6 19c0 1.100.900 2 2 2h8c1.100 0 2-.900 2-2V7H6v12zM19 4h-3.500l-1-1h-5l-1 1H5v2h14V4z"/></svg>
<svg class="abs" style="left:9.500px;top:57.500px" width="22.500" height="22.500" viewBox="0 0 24 24"><path fill="#2b4fb5" d="M13 3c-4.970 0-9 4.030-9 9H1l3.890 3.890.070.140L9 12H6c0-3.870 3.130-7 7-7s7 3.130 7 7-3.130 7-7 7c-1.930 0-3.680-.790-4.940-2.060l-1.420 1.420C8.270 19.990 10.510 21 13 21c4.970 0 9-4.030 9-9s-4.030-9-9-9zm-1 5v5l4.280 2.540.720-1.210-3.500-2.080V8H12z"/></svg>
</div>
<svg class="abs" style="left:10.500px;top:291.800px" width="18.400" height="18.400" viewBox="0 0 24 24"><circle cx="12" cy="12" r="12" fill="#000"/><rect x="10.500" y="6" width="3" height="2.700" fill="#aad3df"/><rect x="10.500" y="10.300" width="3" height="8" fill="#aad3df"/></svg>
</div>
<div class="abs" style="left:1124px;top:485.800px;width:54.500px;height:54.500px;border-radius:50%;background:#3e65c1"><svg class="abs" style="left:11px;top:11.500px" width="32" height="34" viewBox="0 0 32 34"><circle cx="16" cy="15.500" r="12.600" fill="#fff"/><path fill="#fff" d="M8.500 24l2.600 7 6.500-4z"/><path fill="#3e65c1" d="M15 20.900q4.600 1.500 9.200 0q-4.600 6.300-9.200 0z"/></svg></div>
<div class="abs" style="left:1161px;top:486.200px;width:17.500px;height:17.500px;border-radius:50%;background:#c1151b;color:#fff;font-weight:bold;font-size:12px;line-height:17.500px;text-align:center">1</div>
<div id="dd">
<div class="abs" style="left:0;top:6px;width:185px;height:51px;background:#f5f5f5;border-bottom:1px solid #989898;border-top-right-radius:4px"></div>
<div class="abs" id="srch" style="left:15px;top:22px;font-size:15px;color:#757575;letter-spacing:0.35px;line-height:18px">Search...</div>
<div class="opt" style="top:57.2px;background:#f5f5f5"><div class="cb"></div>Alameda</div><div class="opt" style="top:101.2px;background:#fff"><div class="cb"></div>Alpine</div><div class="opt" style="top:145.2px;background:#f5f5f5"><div class="cb"></div>Amador</div><div class="opt" style="top:189.2px;background:#fff"><div class="cb"></div>Butte</div><div class="opt" style="top:233.2px;background:#fff"><div class="cb"></div>Calaveras</div>
<div class="abs" style="left:112px;top:209px;width:67px;height:31px;border-radius:6px;background:#1a4c94;color:#fff;font-weight:bold;font-size:12.500px;letter-spacing:0.9px;text-align:center;line-height:32px;padding-left:1px">Apply</div>
<div class="abs" style="left:185px;top:0;width:14px;height:250px;background:#fafafa"><div class="abs" style="left:3px;top:5px;border-left:4px solid transparent;border-right:4px solid transparent;border-bottom:4px solid #a3a3a3"></div><div class="abs" style="left:1px;top:14px;width:12px;height:21px;background:#c1c1c1"></div><div class="abs" style="left:3px;top:239px;border-left:4px solid transparent;border-right:4px solid transparent;border-top:4px solid #505050"></div></div>
</div>
</body>
</html>
